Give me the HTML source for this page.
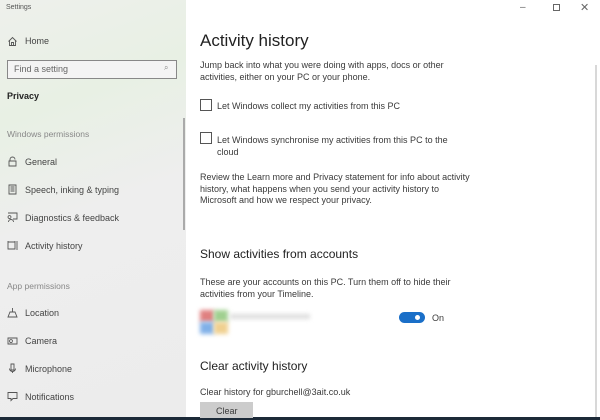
<!DOCTYPE html>
<html><head><meta charset="utf-8"><style>
*{margin:0;padding:0;box-sizing:border-box}
body{width:600px;height:420px;overflow:hidden;position:relative;background:#fff;font-family:"Liberation Sans",sans-serif;color:#333}
.a{position:absolute;white-space:nowrap}
#side{position:absolute;left:0;top:0;width:186px;height:420px;background:linear-gradient(160deg,#eef0ec 0%,#e8f0e4 25%,#eeeeee 50%,#ececec 100%)}
.s{font-size:9px;color:#444}
.ic{position:absolute;left:7px;width:11px;height:11px}
.m{font-size:9px;color:#3a3a3a}
.cb{position:absolute;left:200px;width:12px;height:12px;border:1px solid #555;background:#fff}
</style></head><body>
<div id="side">
<div class="a" style="left:6px;top:4px;font-size:7px;color:#555">Settings</div>
<svg class="ic" style="top:36px" viewBox="0 0 11 11"><path d="M1.5 5.5L5.5 1.5 9.5 5.5M2.5 4.5V9.5H8.5V4.5M4.5 9.5V6.5H6.5V9.5" fill="none" stroke="#555" stroke-width=".9"/></svg>
<div class="a s" style="left:25px;top:36px">Home</div>
<div class="a" style="left:7px;top:60px;width:170px;height:19px;border:1px solid #888;background:#f4f4f4"></div>
<div class="a" style="left:14px;top:64px;font-size:9px;color:#666">Find a setting</div>
<div class="a" style="left:164px;top:63px;font-size:8px;color:#888">⌕</div>
<div class="a" style="left:7px;top:91px;font-size:9px;font-weight:bold;color:#222">Privacy</div>
<div class="a" style="left:7px;top:129px;font-size:8.5px;color:#888">Windows permissions</div>
<svg class="ic" style="top:156px" viewBox="0 0 11 11"><path d="M3 5V3.5a2.5 2.5 0 0 1 5 0M2 5h7v5H2z" fill="none" stroke="#555" stroke-width=".9"/></svg>
<div class="a s" style="left:25px;top:157px">General</div>
<svg class="ic" style="top:184px" viewBox="0 0 11 11"><path d="M2 1h7v9H2zM3.5 3h4M3.5 5h4M3.5 7h4" fill="none" stroke="#555" stroke-width=".9"/></svg>
<div class="a s" style="left:25px;top:185px">Speech, inking &amp; typing</div>
<svg class="ic" style="top:212px" viewBox="0 0 11 11"><path d="M1 1h9v6H6M4 5a1.5 1.5 0 1 0 0 .1M1.5 10a2.5 2.5 0 0 1 5 0" fill="none" stroke="#555" stroke-width=".9"/></svg>
<div class="a s" style="left:25px;top:213px">Diagnostics &amp; feedback</div>
<svg class="ic" style="top:240px" viewBox="0 0 11 11"><path d="M1 2h7v7H1zM10 1v9M1 1v1M8 1v1" fill="none" stroke="#555" stroke-width=".9"/></svg>
<div class="a s" style="left:25px;top:241px">Activity history</div>
<div class="a" style="left:7px;top:281px;font-size:8.5px;color:#888">App permissions</div>
<svg class="ic" style="top:307px" viewBox="0 0 11 11"><path d="M5.5 1v4M3 5h5L10 10H1z" fill="none" stroke="#555" stroke-width=".9"/></svg>
<div class="a s" style="left:25px;top:308px">Location</div>
<svg class="ic" style="top:335px" viewBox="0 0 11 11"><path d="M1 3h9v6H1z M5.5 6a1.5 1.5 0 1 0 0 .1" fill="none" stroke="#555" stroke-width=".9"/></svg>
<div class="a s" style="left:25px;top:336px">Camera</div>
<svg class="ic" style="top:363px" viewBox="0 0 11 11"><path d="M4 1h3v6H4zM2.5 5.5a3 3 0 0 0 6 0M5.5 8.5V10" fill="none" stroke="#555" stroke-width=".9"/></svg>
<div class="a s" style="left:25px;top:364px">Microphone</div>
<svg class="ic" style="top:391px" viewBox="0 0 11 11"><path d="M1 1.5h9v6H6L4 9.5V7.5H1z" fill="none" stroke="#555" stroke-width=".9"/></svg>
<div class="a s" style="left:25px;top:392px">Notifications</div>
<div class="a" style="left:183px;top:118px;width:2px;height:112px;background:#aaa"></div>
</div>
<div class="a" style="left:0;top:417px;width:600px;height:3px;background:#1c2a38"></div>

<div class="a" style="left:520px;top:2px;font-size:10px;color:#666">–</div>
<div class="a" style="left:553px;top:4px;width:7px;height:7px;border:1px solid #666"></div>
<div class="a" style="left:580px;top:1px;font-size:11px;color:#666">✕</div>
<div class="a" style="left:595px;top:65px;width:2px;height:352px;background:#d8d8d8"></div>

<div class="a" style="left:200px;top:31px;font-size:17px;color:#222">Activity history</div>
<div class="a m" style="left:200px;top:60px;line-height:11.5px">Jump back into what you were doing with apps, docs or other<br>activities, either on your PC or your phone.</div>
<div class="cb" style="top:99px"></div>
<div class="a m" style="left:217px;top:101px">Let Windows collect my activities from this PC</div>
<div class="cb" style="top:132px"></div>
<div class="a m" style="left:217px;top:134px;line-height:12px">Let Windows synchronise my activities from this PC to the<br>cloud</div>
<div class="a m" style="left:200px;top:172px;line-height:11.7px">Review the Learn more and Privacy statement for info about activity<br>history, what happens when you send your activity history to<br>Microsoft and how we respect your privacy.</div>
<div class="a" style="left:200px;top:247px;font-size:12px;color:#222">Show activities from accounts</div>
<div class="a m" style="left:200px;top:277px;line-height:11.5px">These are your accounts on this PC. Turn them off to hide their<br>activities from your Timeline.</div>
<div class="a" style="left:200px;top:310px;width:14px;height:12px;background:#e08080;filter:blur(2px)"></div>
<div class="a" style="left:214px;top:310px;width:14px;height:12px;background:#a0d090;filter:blur(2px)"></div>
<div class="a" style="left:200px;top:322px;width:14px;height:12px;background:#80b0e8;filter:blur(2px)"></div>
<div class="a" style="left:214px;top:322px;width:14px;height:12px;background:#f0d090;filter:blur(2px)"></div>
<div class="a" style="left:230px;top:314px;width:80px;height:5px;background:#ddd;filter:blur(2px)"></div>
<div class="a" style="left:399px;top:312px;width:26px;height:11px;border-radius:6px;background:#1a6fc8"></div>
<div class="a" style="left:415px;top:315px;width:5px;height:5px;border-radius:50%;background:#fff"></div>
<div class="a m" style="left:432px;top:313px">On</div>
<div class="a" style="left:200px;top:359px;font-size:12px;color:#222">Clear activity history</div>
<div class="a m" style="left:200px;top:387px">Clear history for gburchell@3ait.co.uk</div>
<div class="a" style="left:200px;top:402px;width:53px;height:16px;background:#ccc"></div>
<div class="a m" style="left:216px;top:406px">Clear</div>
</body></html>
